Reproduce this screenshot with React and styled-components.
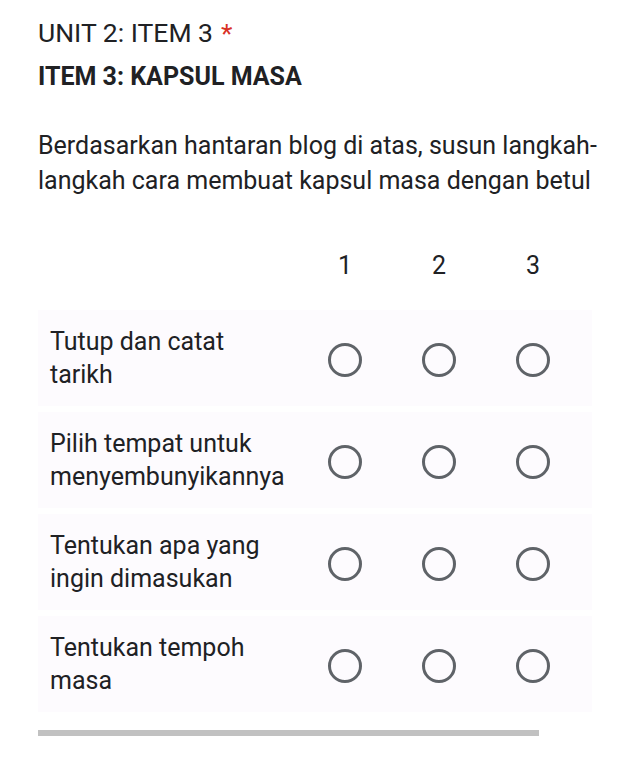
import React from 'react'
import styled, { createGlobalStyle } from 'styled-components'

const GlobalStyle = createGlobalStyle`
  body {
    margin: 0;
    background: #ffffff;
    font-family: Roboto, "Noto Sans", Arial, sans-serif;
    color: #202124;
  }
`

const Main = styled.main`
  padding: 17px 0 0 38px;
  width: 554px;
`

const Title = styled.h1`
  margin: 0;
  font-size: 26.5px;
  font-weight: 400;
  line-height: 32px;
`

const Star = styled.span`
  color: #d93025;
  margin-left: 8px;
`

const Subtitle = styled.h2`
  margin: 12px 0 0;
  font-size: 25px;
  font-weight: 700;
  line-height: 32px;
`

const Description = styled.p`
  margin: 35px 0 0;
  width: 590px;
  font-size: 25px;
  line-height: 35px;
  font-weight: 400;
`

const Grid = styled.section`
  margin-top: 50px;
  display: flex;
  flex-direction: column;
  gap: 6px;
`

const Row = styled.div`
  display: grid;
  grid-template-columns: 1fr repeat(3, 94px);
  align-items: center;
  padding: 0 12px;
  min-height: ${p => (p.$header ? '36px' : '96px')};
  background: ${p => (p.$header ? 'transparent' : '#fdfbfe')};
  margin-bottom: ${p => (p.$header ? '20px' : '0')};
`

const Label = styled.div`
  font-size: 25px;
  line-height: 33px;
  max-width: 238px;
`

const ColHead = styled.div`
  text-align: center;
  font-size: 25px;
  line-height: 32px;
`

const Cell = styled.div`
  display: flex;
  justify-content: center;
  align-items: center;
  padding-top: 3px;
`

const Radio = styled.span`
  width: 34px;
  height: 34px;
  border: 3px solid #5f6368;
  border-radius: 50%;
  box-sizing: border-box;
`

const Scrollbar = styled.div`
  margin-top: 18px;
  width: 501px;
  height: 6px;
  background: #c1c1c1;
`

const columns = ['1', '2', '3']
const items = [
  'Tutup dan catat tarikh',
  'Pilih tempat untuk menyembunyikannya',
  'Tentukan apa yang ingin dimasukan',
  'Tentukan tempoh masa',
]

export default function App() {
  return (
    <Main>
      <GlobalStyle />
      <Title>
        UNIT 2: ITEM 3<Star>*</Star>
      </Title>
      <Subtitle>ITEM 3: KAPSUL MASA</Subtitle>
      <Description>
        Berdasarkan hantaran blog di atas, susun langkah-langkah cara membuat kapsul masa dengan betul
      </Description>
      <Grid>
        <Row $header>
          <div />
          {columns.map(c => (
            <ColHead key={c}>{c}</ColHead>
          ))}
        </Row>
        {items.map(item => (
          <Row key={item}>
            <Label>{item}</Label>
            {columns.map(c => (
              <Cell key={c}>
                <Radio />
              </Cell>
            ))}
          </Row>
        ))}
      </Grid>
      <Scrollbar />
    </Main>
  )
}
